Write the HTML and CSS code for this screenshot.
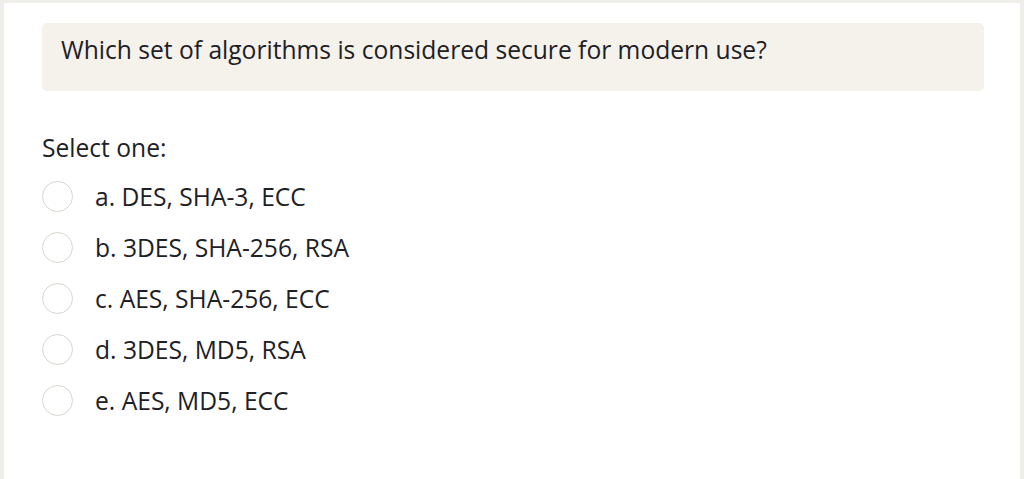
FILE: index.html
```html
<!DOCTYPE html>
<html>
<head>
<meta charset="utf-8">
<link rel="stylesheet" href="styles.css">
</head>
<body>
<div class="panel">
  <div class="qtext">Which set of algorithms is considered secure for modern use?</div>
  <div class="prompt">Select one:</div>
  <div class="answers">
    <label class="opt"><span class="radio"></span><span class="lbl">a. DES, SHA-3, ECC</span></label>
    <label class="opt"><span class="radio"></span><span class="lbl">b. 3DES, SHA-256, RSA</span></label>
    <label class="opt"><span class="radio"></span><span class="lbl">c. AES, SHA-256, ECC</span></label>
    <label class="opt"><span class="radio"></span><span class="lbl">d. 3DES, MD5, RSA</span></label>
    <label class="opt"><span class="radio"></span><span class="lbl">e. AES, MD5, ECC</span></label>
  </div>
</div>
</body>
</html>
```
FILE: styles.css
```css
html, body {
  margin: 0;
  padding: 0;
  height: 100%;
}
body {
  background: #efeeea;
  font-family: "Open Sans", "Noto Sans", sans-serif;
  color: #1d2125;
  padding: 3px 4px 0 4px;
  box-sizing: border-box;
  overflow: hidden;
}
.panel {
  background: #ffffff;
  height: 100%;
  padding: 20px 36px 0 38px;
  box-sizing: border-box;
}
.qtext {
  background: #f5f2ec;
  border-radius: 5px;
  font-size: 24.6px;
  line-height: 34px;
  padding: 10px 19px 24px 19px;
}
.prompt {
  font-size: 24.6px;
  line-height: 34px;
  margin-top: 40px;
  margin-bottom: 15px;
}
.answers {
  display: flex;
  flex-direction: column;
  gap: 17px;
}
.opt {
  display: flex;
  align-items: center;
  gap: 22px;
  font-size: 24.6px;
  line-height: 34px;
}
.radio {
  width: 31px;
  height: 31px;
  border: 1.5px solid #d9d6d0;
  border-radius: 50%;
  box-sizing: border-box;
  flex: none;
  margin-top: -1px;
}
```
